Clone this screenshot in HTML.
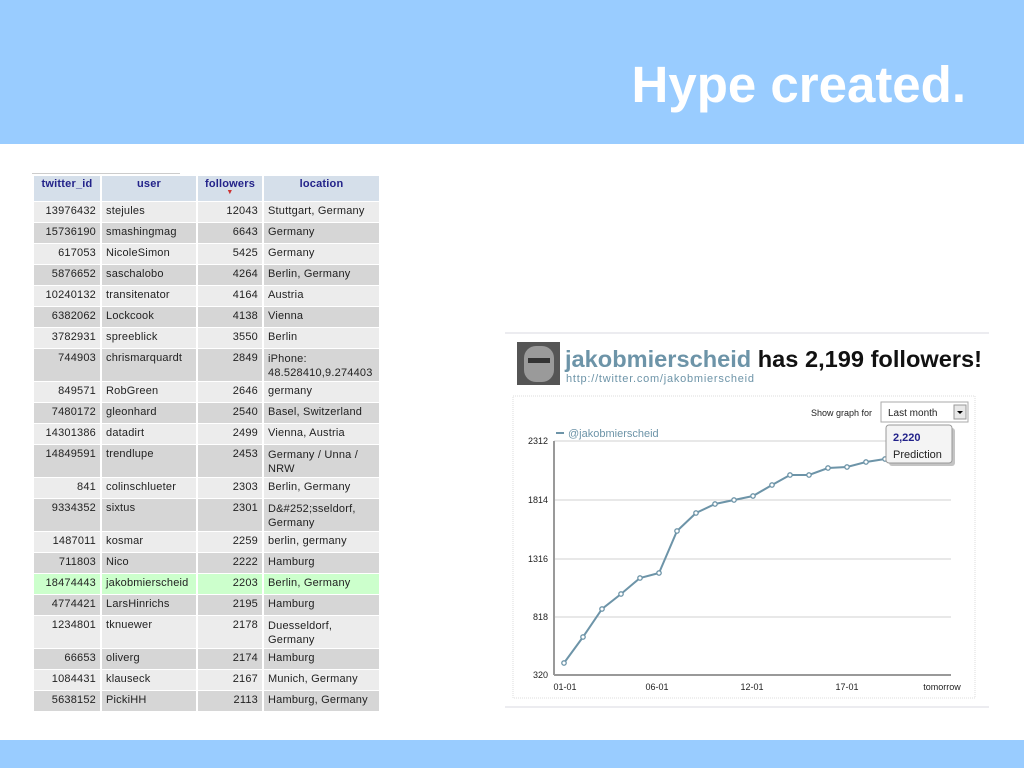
<!DOCTYPE html>
<html><head><meta charset="utf-8"><style>
body{margin:0;width:1024px;height:768px;position:relative;background:#fff;font-family:"Liberation Sans",sans-serif;overflow:hidden}
.top{position:absolute;left:0;top:0;width:1024px;height:144px;background:#99ccff}
.top h1{position:absolute;right:58px;top:55px;margin:0;color:#fff;font-size:51px;font-weight:bold}
.bot{position:absolute;left:0;top:740px;width:1024px;height:28px;background:#99ccff}
table{position:absolute;left:32px;top:175px;border-collapse:separate;border-spacing:2px 1px;font-size:11px;color:#222;letter-spacing:.2px}
td,th{padding:2px 4px;vertical-align:top}
th{background:#d5dfea;color:#23238a;font-size:11px;height:21px;line-height:13px}
td{height:16px;line-height:15px}
td.d{line-height:14px;height:28px;padding-top:3px;padding-bottom:1px}
tr.a td{background:#ececec}tr.b td{background:#d6d6d6}tr.g td{background:#ccffcc}
td.r{text-align:right}
.hl{position:absolute;left:32px;top:173px;width:148px;border-top:1px solid #ccc}
</style></head><body>
<div class="top"><h1>Hype created.</h1></div>
<div class="hl"></div>
<table>
<tr><th style="width:58px">twitter_id</th><th style="width:86px">user</th><th style="width:56px">followers<div style="color:#c33;font-size:7px;line-height:4px">▼</div></th><th style="width:107px">location</th></tr>
<tr class="a"><td class="r">13976432</td><td>stejules</td><td class="r">12043</td><td>Stuttgart, Germany</td></tr>
<tr class="b"><td class="r">15736190</td><td>smashingmag</td><td class="r">6643</td><td>Germany</td></tr>
<tr class="a"><td class="r">617053</td><td>NicoleSimon</td><td class="r">5425</td><td>Germany</td></tr>
<tr class="b"><td class="r">5876652</td><td>saschalobo</td><td class="r">4264</td><td>Berlin, Germany</td></tr>
<tr class="a"><td class="r">10240132</td><td>transitenator</td><td class="r">4164</td><td>Austria</td></tr>
<tr class="b"><td class="r">6382062</td><td>Lockcook</td><td class="r">4138</td><td>Vienna</td></tr>
<tr class="a"><td class="r">3782931</td><td>spreeblick</td><td class="r">3550</td><td>Berlin</td></tr>
<tr class="b"><td class="r">744903</td><td>chrismarquardt</td><td class="r">2849</td><td class="d">iPhone:<br>48.528410,9.274403</td></tr>
<tr class="a"><td class="r">849571</td><td>RobGreen</td><td class="r">2646</td><td>germany</td></tr>
<tr class="b"><td class="r">7480172</td><td>gleonhard</td><td class="r">2540</td><td>Basel, Switzerland</td></tr>
<tr class="a"><td class="r">14301386</td><td>datadirt</td><td class="r">2499</td><td>Vienna, Austria</td></tr>
<tr class="b"><td class="r">14849591</td><td>trendlupe</td><td class="r">2453</td><td class="d">Germany / Unna /<br>NRW</td></tr>
<tr class="a"><td class="r">841</td><td>colinschlueter</td><td class="r">2303</td><td>Berlin, Germany</td></tr>
<tr class="b"><td class="r">9334352</td><td>sixtus</td><td class="r">2301</td><td class="d">D&amp;#252;sseldorf,<br>Germany</td></tr>
<tr class="a"><td class="r">1487011</td><td>kosmar</td><td class="r">2259</td><td>berlin, germany</td></tr>
<tr class="b"><td class="r">711803</td><td>Nico</td><td class="r">2222</td><td>Hamburg</td></tr>
<tr class="g"><td class="r">18474443</td><td>jakobmierscheid</td><td class="r">2203</td><td>Berlin, Germany</td></tr>
<tr class="b"><td class="r">4774421</td><td>LarsHinrichs</td><td class="r">2195</td><td>Hamburg</td></tr>
<tr class="a"><td class="r">1234801</td><td>tknuewer</td><td class="r">2178</td><td class="d">Duesseldorf,<br>Germany</td></tr>
<tr class="b"><td class="r">66653</td><td>oliverg</td><td class="r">2174</td><td>Hamburg</td></tr>
<tr class="a"><td class="r">1084431</td><td>klauseck</td><td class="r">2167</td><td>Munich, Germany</td></tr>
<tr class="b"><td class="r">5638152</td><td>PickiHH</td><td class="r">2113</td><td>Hamburg, Germany</td></tr>
</table>
<svg style="position:absolute;left:0;top:0" width="1024" height="768" font-family="Liberation Sans, sans-serif">
<line x1="505" y1="333" x2="989" y2="333" stroke="#d8d8e0"/>
<line x1="505" y1="707" x2="989" y2="707" stroke="#d8d8e0"/>
<rect x="517" y="342" width="43" height="43" fill="#555"/>
<rect x="524" y="346" width="30" height="36" rx="12" fill="#9a9a9a"/>
<rect x="528" y="358" width="22" height="5" fill="#333"/>
<text x="565" y="367" font-size="23" font-weight="bold" fill="#6d94a8" textLength="417" lengthAdjust="spacingAndGlyphs">jakobmierscheid <tspan fill="#111">has 2,199 followers!</tspan></text>
<text x="566" y="382" font-size="11" fill="#6d94a8" textLength="188">http://twitter.com/jakobmierscheid</text>
<rect x="513" y="396" width="462" height="302" fill="none" stroke="#ddd" stroke-dasharray="1,1"/>
<text x="811" y="416" font-size="9" fill="#222">Show graph for</text>
<rect x="881" y="402" width="87" height="20" fill="#fff" stroke="#aaa"/>
<text x="888" y="416" font-size="10" fill="#222">Last month</text>
<rect x="954" y="405" width="12" height="14" fill="#e8e8e8" stroke="#999"/>
<path d="M957 411h6l-3 3z" fill="#000"/>
<g stroke="#d0d0d0"><line x1="554" y1="441" x2="951" y2="441"/><line x1="554" y1="500" x2="951" y2="500"/><line x1="554" y1="559" x2="951" y2="559"/><line x1="554" y1="617" x2="951" y2="617"/></g>
<g stroke="#999" stroke-width="2"><line x1="554" y1="441" x2="554" y2="675"/><line x1="554" y1="675" x2="951" y2="675"/></g>
<g font-size="9" fill="#222" text-anchor="end"><text x="548" y="444">2312</text><text x="548" y="503">1814</text><text x="548" y="562">1316</text><text x="548" y="620">818</text><text x="548" y="678">320</text></g>
<g font-size="9" fill="#222" text-anchor="middle"><text x="565" y="690">01-01</text><text x="657" y="690">06-01</text><text x="752" y="690">12-01</text><text x="847" y="690">17-01</text><text x="942" y="690">tomorrow</text></g>
<line x1="556" y1="433" x2="564" y2="433" stroke="#6d94a8" stroke-width="2"/>
<text x="568" y="437" font-size="11" fill="#6d94a8">@jakobmierscheid</text>
<polyline fill="none" stroke="#6d94a8" stroke-width="2" points="564,663 583,637 602,609 621,594 640,578 659,573 677,531 696,513 715,504 734,500 753,496 772,485 790,475 809,475 828,468 847,467 866,462 885,459"/>
<g fill="#fff" stroke="#6d94a8" stroke-width="1.3"><circle cx="564" cy="663" r="2.2"/><circle cx="583" cy="637" r="2.2"/><circle cx="602" cy="609" r="2.2"/><circle cx="621" cy="594" r="2.2"/><circle cx="640" cy="578" r="2.2"/><circle cx="659" cy="573" r="2.2"/><circle cx="677" cy="531" r="2.2"/><circle cx="696" cy="513" r="2.2"/><circle cx="715" cy="504" r="2.2"/><circle cx="734" cy="500" r="2.2"/><circle cx="753" cy="496" r="2.2"/><circle cx="772" cy="485" r="2.2"/><circle cx="790" cy="475" r="2.2"/><circle cx="809" cy="475" r="2.2"/><circle cx="828" cy="468" r="2.2"/><circle cx="847" cy="467" r="2.2"/><circle cx="866" cy="462" r="2.2"/><circle cx="885" cy="459" r="2.2"/></g>
<rect x="889" y="428" width="66" height="38" rx="3" fill="#555" opacity=".35"/>
<rect x="886" y="425" width="66" height="38" rx="3" fill="#f4f4f4" stroke="#999"/>
<text x="893" y="441" font-size="11" font-weight="bold" fill="#22228a">2,220</text>
<text x="893" y="458" font-size="11" fill="#222">Prediction</text>
</svg>
<div class="bot"></div>
</body></html>
